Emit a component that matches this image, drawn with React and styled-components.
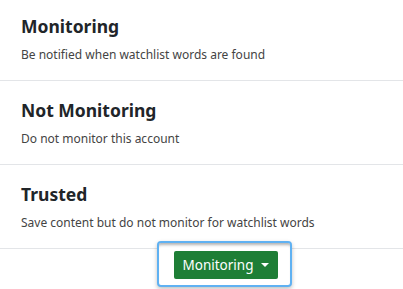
import React from "react";
import styled, { createGlobalStyle } from "styled-components";

const GlobalStyle = createGlobalStyle`
  html, body {
    margin: 0;
    padding: 0;
    background: #fff;
  }
  body {
    font-family: "Noto Sans", "Open Sans", sans-serif;
    color: #212529;
  }
`;

const Page = styled.div`
  width: 403px;
  height: 289px;
  overflow: hidden;
  background: #fff;
`;

const List = styled.ul`
  list-style: none;
  margin: 0;
  padding: 0;
`;

const Option = styled.li`
  height: 81px;
  padding: 0 21px 3px;
  box-sizing: border-box;
  border-bottom: 1px solid #e3e5e8;
  margin-bottom: 3px;
  display: flex;
  flex-direction: column;
  justify-content: center;

  &:last-child {
    margin-bottom: 0;
  }
`;

const Title = styled.div`
  font-size: 17.5px;
  font-weight: 700;
  line-height: 22px;
  color: #212529;
  margin-bottom: 10px;
`;

const Description = styled.div`
  font-size: 12px;
  line-height: 16px;
  color: #444;
`;

const Footer = styled.div`
  display: flex;
  justify-content: center;
  margin-top: -8px;
`;

const FocusRing = styled.div`
  margin-left: 46px;
  padding: 8px 12px 6px 15px;
  background: #fff;
  border: 2px solid #5fb1f2;
  border-radius: 4px;
  box-shadow: inset 0 4px 3px -2px rgba(0, 0, 0, 0.3),
    0 2px 4px rgba(0, 0, 0, 0.25);
`;

const Toggle = styled.button`
  display: flex;
  align-items: center;
  gap: 8px;
  height: 28px;
  padding: 0 9px;
  border: none;
  border-radius: 2px;
  background: #1e7e36;
  color: #fff;
  font-family: "Noto Sans", sans-serif;
  font-size: 13.5px;
`;

const Caret = styled.span`
  width: 0;
  height: 0;
  border-left: 4px solid transparent;
  border-right: 4px solid transparent;
  border-top: 4px solid #fff;
`;

const options = [
  { title: "Monitoring", text: "Be notified when watchlist words are found" },
  { title: "Not Monitoring", text: "Do not monitor this account" },
  { title: "Trusted", text: "Save content but do not monitor for watchlist words" },
];

export default function App() {
  return (
    <Page>
      <GlobalStyle />
      <List>
        {options.map((o) => (
          <Option key={o.title}>
            <Title>{o.title}</Title>
            <Description>{o.text}</Description>
          </Option>
        ))}
      </List>
      <Footer>
        <FocusRing>
          <Toggle>
            Monitoring
            <Caret />
          </Toggle>
        </FocusRing>
      </Footer>
    </Page>
  );
}
